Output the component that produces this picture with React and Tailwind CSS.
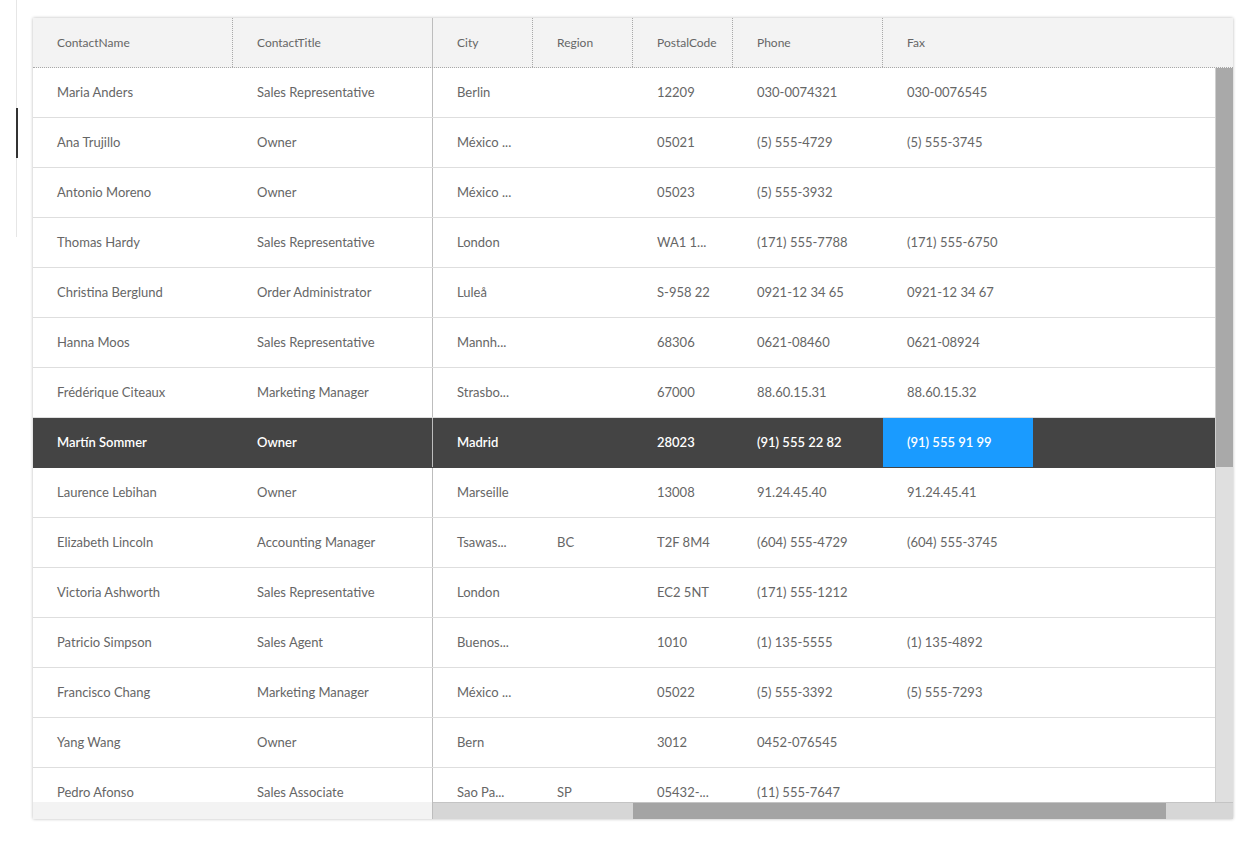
import React from "react";

const cols = [
  { key: "name", label: "ContactName", w: "w-[200px]", head: "border-r border-dotted border-[#a8a8a8]" },
  { key: "title", label: "ContactTitle", w: "w-[200px]", head: "border-r border-solid border-[#bdbdbd]", body: "border-r border-solid border-[#bdbdbd]" },
  { key: "city", label: "City", w: "w-[100px]", head: "border-r border-dotted border-[#a8a8a8]" },
  { key: "region", label: "Region", w: "w-[100px]", head: "border-r border-dotted border-[#a8a8a8]" },
  { key: "postal", label: "PostalCode", w: "w-[100px]", head: "border-r border-dotted border-[#a8a8a8]" },
  { key: "phone", label: "Phone", w: "w-[150px]", head: "border-r border-dotted border-[#a8a8a8]" },
  { key: "fax", label: "Fax", w: "w-[150px]", head: "" },
];

const rows = [
  ["Maria Anders", "Sales Representative", "Berlin", "", "12209", "030-0074321", "030-0076545"],
  ["Ana Trujillo", "Owner", "México ...", "", "05021", "(5) 555-4729", "(5) 555-3745"],
  ["Antonio Moreno", "Owner", "México ...", "", "05023", "(5) 555-3932", ""],
  ["Thomas Hardy", "Sales Representative", "London", "", "WA1 1...", "(171) 555-7788", "(171) 555-6750"],
  ["Christina Berglund", "Order Administrator", "Luleå", "", "S-958 22", "0921-12 34 65", "0921-12 34 67"],
  ["Hanna Moos", "Sales Representative", "Mannh...", "", "68306", "0621-08460", "0621-08924"],
  ["Frédérique Citeaux", "Marketing Manager", "Strasbo...", "", "67000", "88.60.15.31", "88.60.15.32"],
  ["Martín Sommer", "Owner", "Madrid", "", "28023", "(91) 555 22 82", "(91) 555 91 99"],
  ["Laurence Lebihan", "Owner", "Marseille", "", "13008", "91.24.45.40", "91.24.45.41"],
  ["Elizabeth Lincoln", "Accounting Manager", "Tsawas...", "BC", "T2F 8M4", "(604) 555-4729", "(604) 555-3745"],
  ["Victoria Ashworth", "Sales Representative", "London", "", "EC2 5NT", "(171) 555-1212", ""],
  ["Patricio Simpson", "Sales Agent", "Buenos...", "", "1010", "(1) 135-5555", "(1) 135-4892"],
  ["Francisco Chang", "Marketing Manager", "México ...", "", "05022", "(5) 555-3392", "(5) 555-7293"],
  ["Yang Wang", "Owner", "Bern", "", "3012", "0452-076545", ""],
  ["Pedro Afonso", "Sales Associate", "Sao Pa...", "SP", "05432-...", "(11) 555-7647", ""],
];

const SELECTED = 7;

export default function App() {
  return (
    <div className="flex bg-white min-h-[842px]" style={{ fontFamily: "Lato, 'Open Sans', sans-serif" }}>
      <div className="ml-[16px] w-px h-[237px] bg-[#e6e6e6] flex flex-col">
        <div className="mt-[108px] h-[50px] w-[2px] bg-[#333]" />
      </div>
      <div className="ml-[16px] mt-[18px] w-[1200px] h-[801px] flex flex-col bg-white shadow-[0_0_3px_rgba(0,0,0,0.28)] overflow-hidden">
        {/* header */}
        <div className="flex h-[50px] shrink-0 bg-[#f3f3f3] border-b border-dotted border-[#a8a8a8]">
          {cols.map((c) => (
            <div key={c.key} className={`${c.w} ${c.head} shrink-0 flex items-center pl-[24px] text-[12px] text-[#666]`}>
              {c.label}
            </div>
          ))}
          <div className="flex-1" />
        </div>
        {/* body */}
        <div className="flex h-[734px] shrink-0">
          <div className="flex-1 overflow-hidden">
            {rows.map((r, i) => {
              const sel = i === SELECTED;
              return (
                <div
                  key={i}
                  className={`flex h-[50px] border-b ${sel ? "bg-[#444] border-[#444] text-white font-semibold" : "border-[#dedede] text-[#666]"}`}
                >
                  {cols.map((c, j) => (
                    <div
                      key={c.key}
                      className={`${c.w} ${c.body || ""} shrink-0 flex items-center pl-[24px] pt-px text-[13px] whitespace-nowrap ${sel && j === 6 ? "bg-[#1a9bff]" : ""}`}
                    >
                      {r[j]}
                    </div>
                  ))}
                  <div className="flex-1" />
                </div>
              );
            })}
          </div>
          <div className="w-[18px] shrink-0 flex flex-col bg-[#dfdfdf] border-l border-[#cfcfcf]">
            <div className="h-[399px] bg-[#a9a9a9]" />
          </div>
        </div>
        {/* horizontal scrollbar */}
        <div className="flex h-[17px] shrink-0">
          <div className="w-[400px] shrink-0 bg-[#f3f3f3] border-r border-[#bdbdbd]" />
          <div className="flex-1 flex bg-[#d6d6d6] border-t border-[#c4c4c4]">
            <div className="w-[200px] shrink-0" />
            <div className="w-[533px] shrink-0 bg-[#a4a4a4]" />
          </div>
        </div>
      </div>
    </div>
  );
}
